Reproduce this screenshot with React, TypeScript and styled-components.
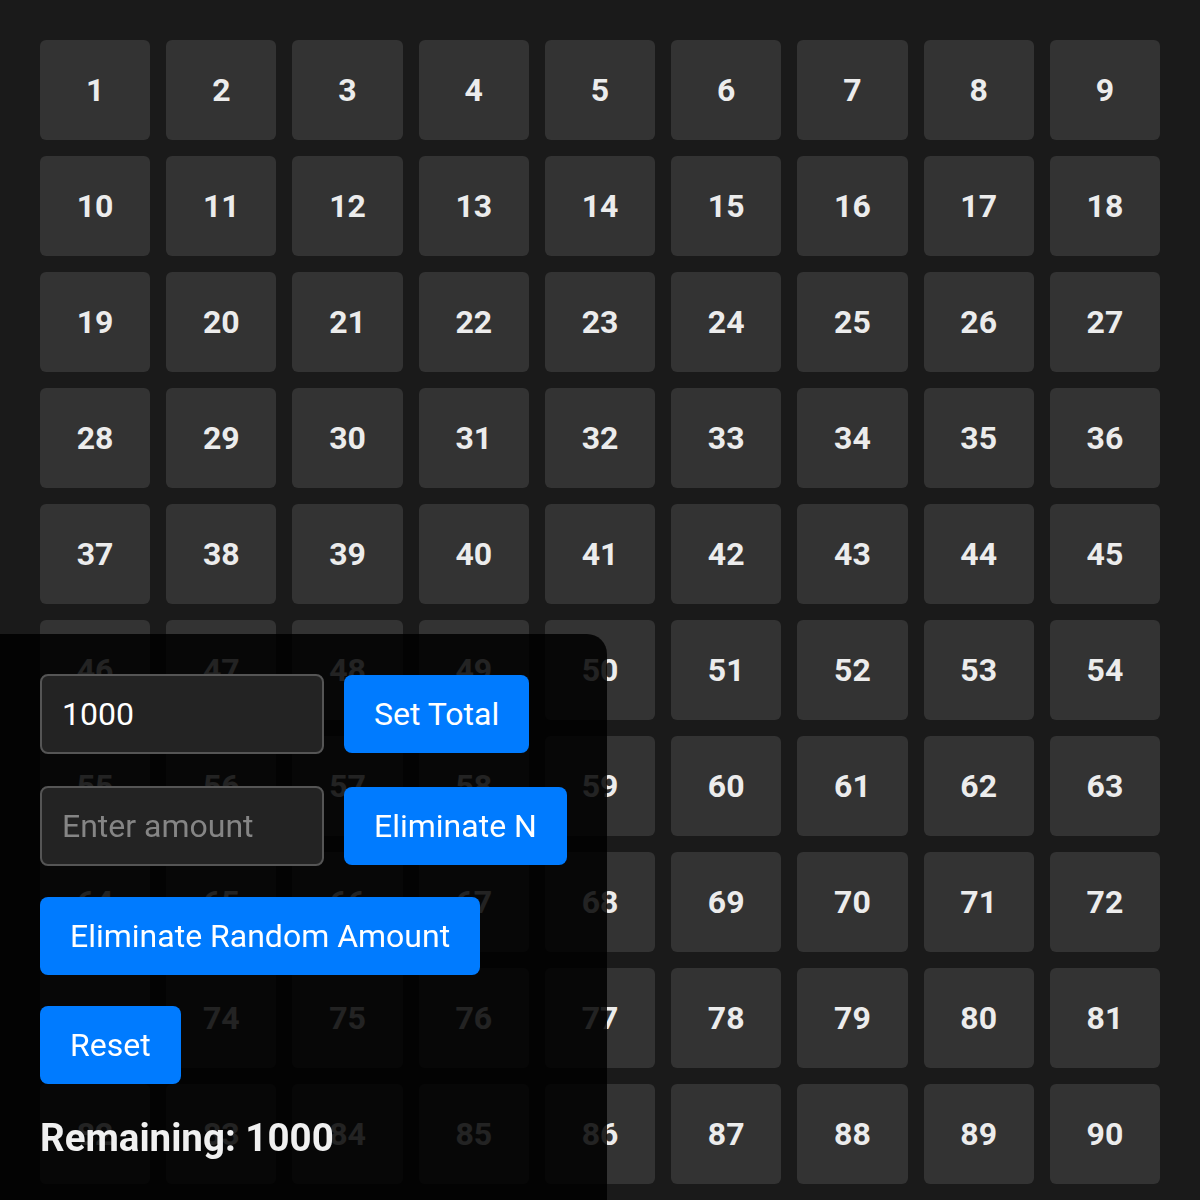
import React, { useState } from 'react';
import styled, { createGlobalStyle } from 'styled-components';

const GlobalStyle = createGlobalStyle`
  html, body {
    margin: 0;
    padding: 0;
    background: #1a1a1a;
    overflow: hidden;
    font-family: Roboto, "Liberation Sans", sans-serif;
  }
`;

const Page = styled.div`
  padding: 40px;
`;

const Grid = styled.div`
  display: grid;
  grid-template-columns: repeat(auto-fill, minmax(100px, 1fr));
  gap: 16px;
`;

const Cell = styled.div<{ $gone?: boolean }>`
  height: 100px;
  border-radius: 6px;
  background: #333333;
  color: #ececec;
  display: flex;
  align-items: center;
  justify-content: center;
  font-size: 32px;
  font-weight: 700;
  opacity: ${(p) => (p.$gone ? 0 : 1)};
`;

const Panel = styled.div`
  position: fixed;
  left: 0;
  bottom: 0;
  padding: 40px;
  background: rgba(0, 0, 0, 0.85);
  border-top-right-radius: 20px;
`;

const Row = styled.div<{ $space?: number }>`
  display: flex;
  align-items: baseline;
  gap: 20px;
  margin-bottom: ${(p) => p.$space ?? 31}px;
`;

const Input = styled.input`
  box-sizing: border-box;
  width: 284px;
  height: 80px;
  padding: 20px;
  font-family: Roboto, "Liberation Sans", sans-serif;
  font-size: 32px;
  color: #ffffff;
  background: #232323;
  border: 2px solid #555555;
  border-radius: 8px;
  outline: none;

  &::placeholder {
    color: #858585;
  }
`;

const Button = styled.button`
  padding: 20px 30px;
  font-family: Roboto, "Liberation Sans", sans-serif;
  font-size: 32px;
  line-height: normal;
  color: #ffffff;
  background: #007bff;
  border: none;
  border-radius: 8px;
  cursor: pointer;
`;

const Remaining = styled.div`
  font-size: 38.5px;
  font-weight: 700;
  color: #f0f0f0;
  line-height: normal;
`;

const App: React.FC = () => {
  const [total, setTotal] = useState('1000');
  const [amount, setAmount] = useState('');
  const count = 1000;
  const cells = Array.from({ length: count }, (_, i) => i + 1);

  return (
    <>
      <GlobalStyle />
      <Page>
        <Grid>
          {cells.map((n) => (
            <Cell key={n}>{n}</Cell>
          ))}
        </Grid>
      </Page>
      <Panel>
        <Row $space={32}>
          <Input value={total} onChange={(e) => setTotal(e.target.value)} />
          <Button>Set Total</Button>
        </Row>
        <Row>
          <Input
            placeholder="Enter amount"
            value={amount}
            onChange={(e) => setAmount(e.target.value)}
          />
          <Button>Eliminate N</Button>
        </Row>
        <Row>
          <Button>Eliminate Random Amount</Button>
        </Row>
        <Row>
          <Button>Reset</Button>
        </Row>
        <Remaining>Remaining: {count}</Remaining>
      </Panel>
    </>
  );
};

export default App;
